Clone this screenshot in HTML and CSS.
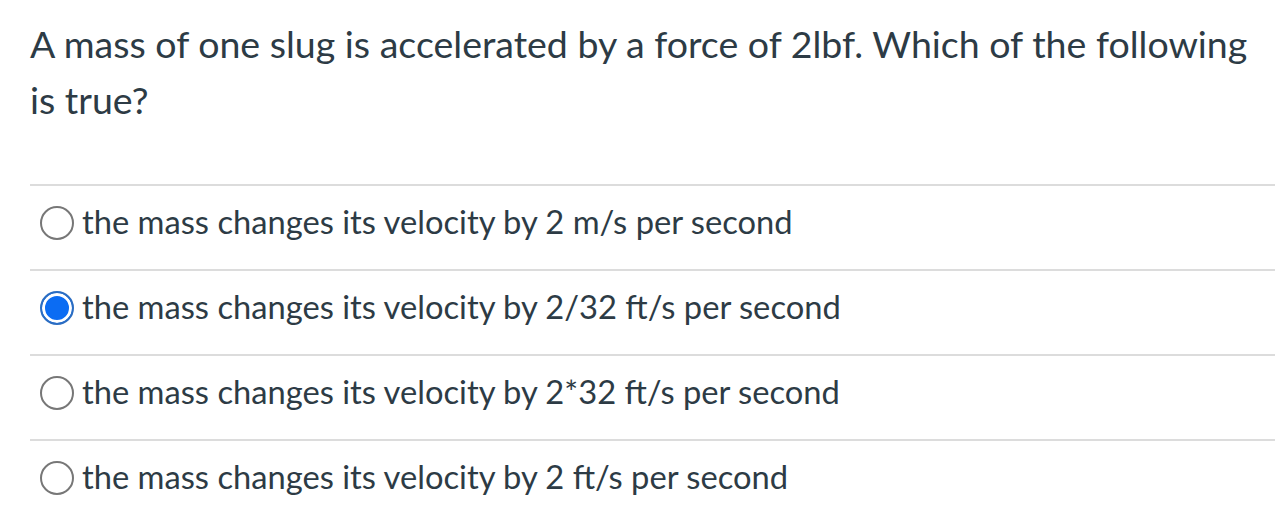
FILE: index.html
```html
<!DOCTYPE html>
<html>
<head>
<meta charset="utf-8">
<link rel="stylesheet" href="styles.css">
</head>
<body>
<div class="question">
  <p class="prompt">A mass of one slug is accelerated by a force of 2lbf. Which of the following is true?</p>
  <div class="answers">
    <label class="answer"><span class="radio"></span><span class="text">the mass changes its velocity by 2 m/s per second</span></label>
    <label class="answer"><span class="radio checked"></span><span class="text">the mass changes its velocity by 2/32 ft/s per second</span></label>
    <label class="answer"><span class="radio"></span><span class="text">the mass changes its velocity by 2*32 ft/s per second</span></label>
    <label class="answer"><span class="radio"></span><span class="text">the mass changes its velocity by 2 ft/s per second</span></label>
  </div>
</div>
</body>
</html>
```

FILE: styles.css
```css
html, body {
  margin: 0;
  padding: 0;
  background: #fff;
}
body {
  font-family: Lato, "Liberation Sans", sans-serif;
  color: #2d3b45;
}
.question {
  padding: 16px 10px 0 30px;
}
.prompt {
  margin: 0;
  font-size: 37.5px;
  line-height: 56px;
  width: 1240px;
}
.answers {
  margin-top: 56px;
}
.answer {
  display: flex;
  align-items: center;
  gap: 8px;
  height: 83px;
  border-top: 2px solid #dcdcdc;
  padding-left: 10px;
}
.radio {
  width: 30px;
  height: 30px;
  border: 2px solid #777;
  border-radius: 50%;
  flex: none;
  margin-bottom: 9px;
}
.radio.checked {
  border: 2px solid #2b6dc2;
  background: #0b6cf3;
  box-shadow: inset 0 0 0 3px #fff;
}
.text {
  font-size: 32.7px;
  margin-bottom: 12px;
}
```
